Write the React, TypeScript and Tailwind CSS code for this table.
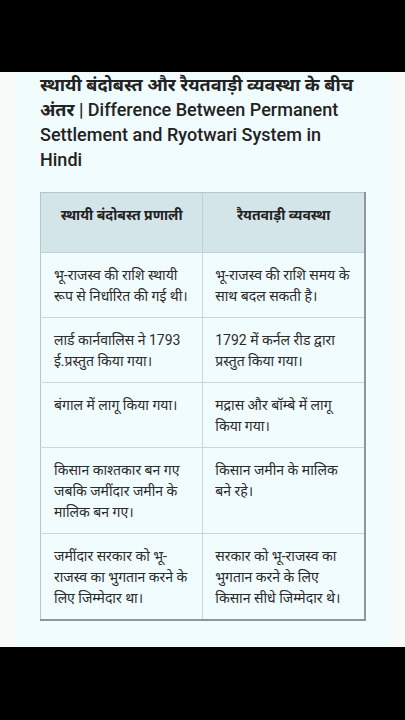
const rows: [string, string][] = [
  ["भू-राजस्व की राशि स्थायी रूप से निर्धारित की गई थी।", "भू-राजस्व की राशि समय के साथ बदल सकती है।"],
  ["लार्ड कार्नवालिस ने 1793 ई.प्रस्तुत किया गया।", "1792 में कर्नल रीड द्वारा प्रस्तुत किया गया।"],
  ["बंगाल में लागू किया गया।", "मद्रास और बॉम्बे में लागू किया गया।"],
  ["किसान काश्तकार बन गए जबकि जमींदार जमीन के मालिक बन गए।", "किसान जमीन के मालिक बने रहे।"],
  ["जमींदार सरकार को भू-राजस्व का भुगतान करने के लिए जिम्मेदार था।", "सरकार को भू-राजस्व का भुगतान करने के लिए किसान सीधे जिम्मेदार थे।"],
];

export default function App() {
  return (
    <div
      className="w-[405px] h-[720px] bg-black flex flex-col"
      style={{ fontFamily: 'Roboto, "Noto Sans", "Noto Sans Devanagari", sans-serif' }}
    >
      <div className="h-[72px] shrink-0" />
      <div className="h-[575px] bg-[#f8fafa] px-[15px]">
        <div className="h-full bg-[#f1fcfe] px-[25px] pb-3">
          <h1 className="text-[18px] leading-[25px] font-medium text-[#222]">
            <span className="font-bold">स्थायी बंदोबस्त और रैयतवाड़ी व्यवस्था के बीच अंतर</span> | Difference Between Permanent Settlement and Ryotwari System in Hindi
          </h1>

          <table className="mt-[20px] w-[326px] table-fixed border-collapse border-t border-l border-t-[#b9c4c6] border-l-[#b9c4c6] border-r-2 border-b-2 border-r-[#8e9698] border-b-[#8e9698] text-[#2b2b2b]">
            <thead>
              <tr className="bg-[#d4e5ea] h-[60px]">
                <th className="w-1/2 align-top pt-[11px] px-3 text-[14px] leading-[22px] font-bold text-[#222] border-r border-b border-[#c3d0d3]">
                  स्थायी बंदोबस्त प्रणाली
                </th>
                <th className="w-1/2 align-top pt-[11px] px-3 text-[14px] leading-[22px] font-bold text-[#222] border-b border-[#c3d0d3]">
                  रैयतवाड़ी व्यवस्था
                </th>
              </tr>
            </thead>
            <tbody>
              {rows.map(([a, b], i) => (
                <tr key={i} className={i < rows.length - 1 ? "border-b border-[#cbd6d8]" : ""}>
                  <td className="align-top pl-[13px] pr-2 pt-[12px] pb-[10px] text-[14px] leading-[21px] border-r border-[#cbd6d8]">
                    {a}
                  </td>
                  <td className="align-top pl-3 pr-2 pt-[12px] pb-[10px] text-[14px] leading-[21px]">
                    {b}
                  </td>
                </tr>
              ))}
            </tbody>
          </table>
        </div>
      </div>
    </div>
  );
}
